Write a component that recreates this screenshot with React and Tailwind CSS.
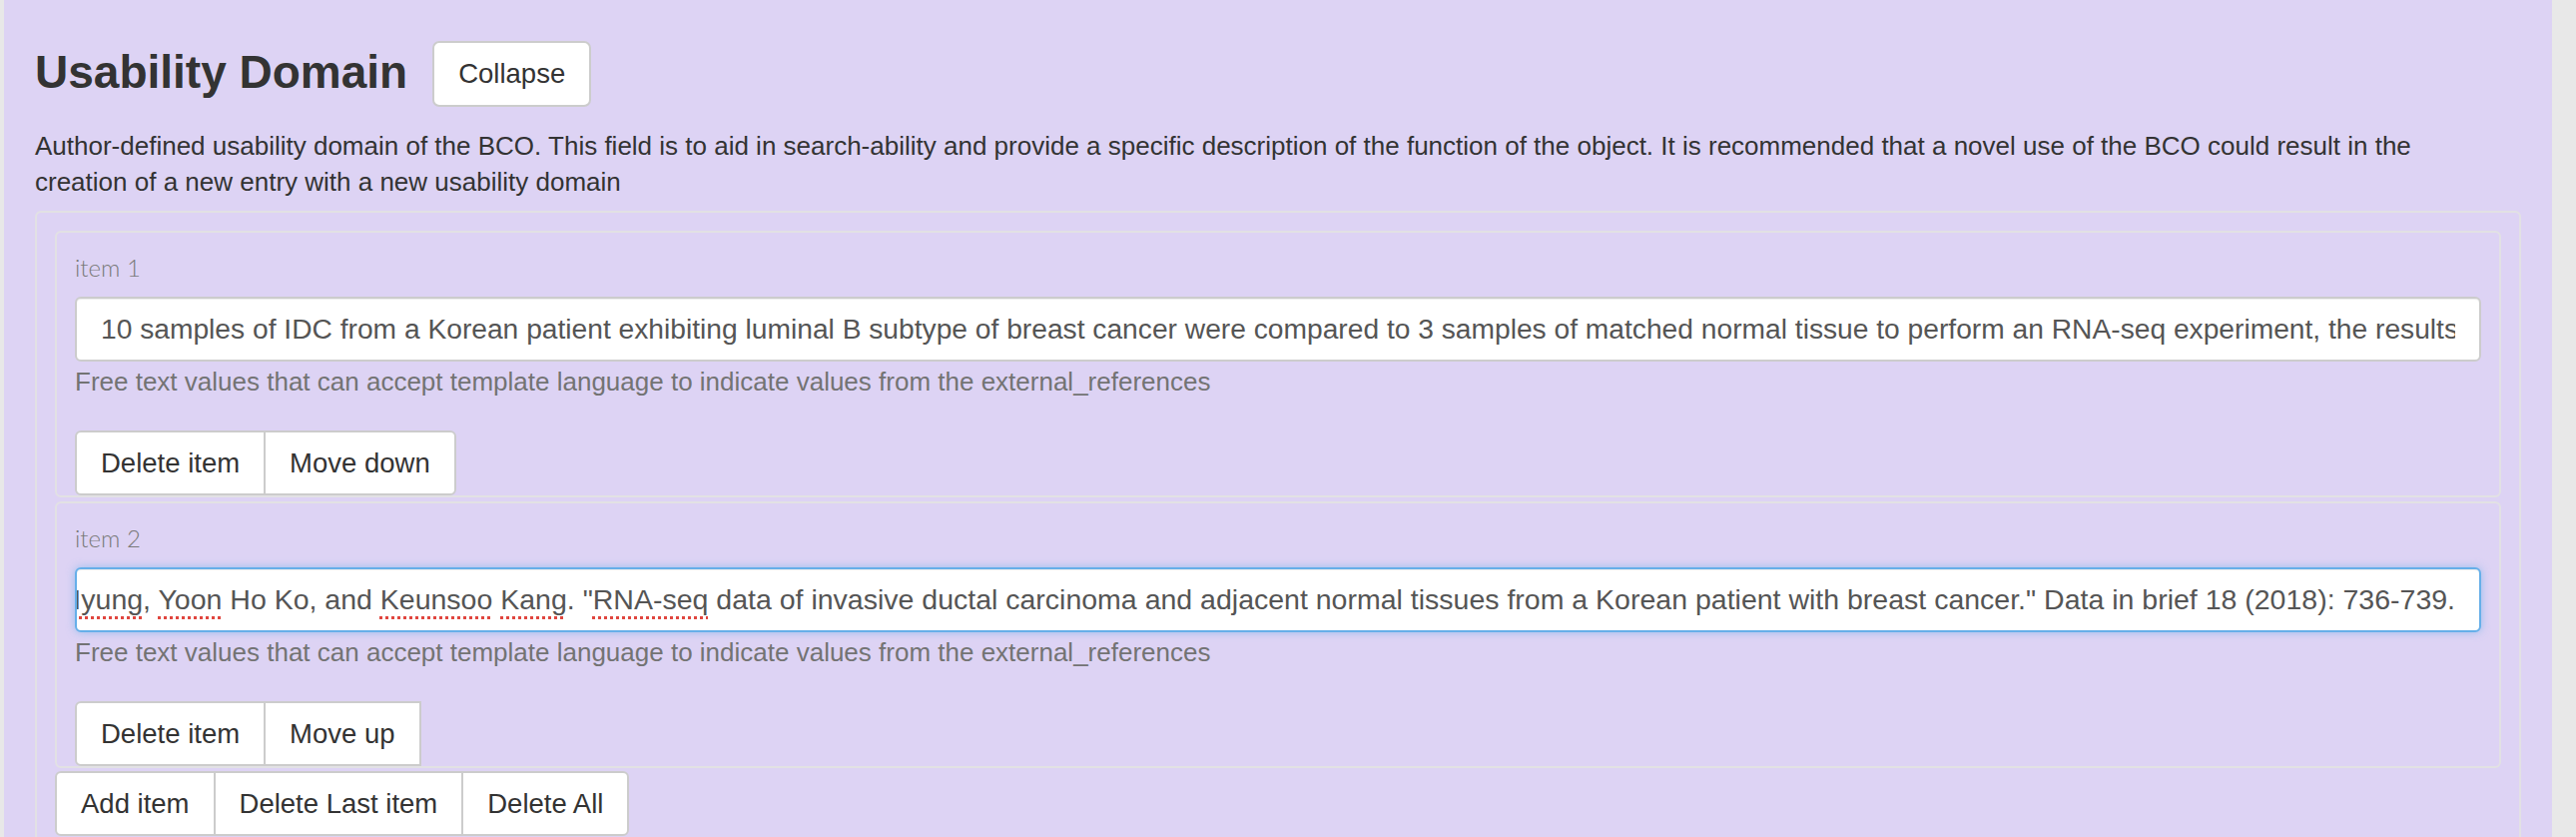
import React from "react";

const btn =
  "h-[65px] px-[24px] border-2 border-[#cccccc] bg-white text-[27.5px] text-[#333333] leading-none flex items-center";

// --- ITEM BOX ---
const Item = ({ label, children, buttons, squareEnd, className = "" }) => (
  <div className={`min-w-0 border-2 border-[#e2e1e4] rounded-[6px] px-[18px] pt-[19px] ${className}`}>
    <div className="text-[24px] leading-[32px] font-light text-[#7a7a7a] font-['Lato','Liberation_Sans',sans-serif] mb-[13px]">
      {label}
    </div>
    {children}
    <p className="mt-[2px] text-[26px] leading-[36px] text-[#737373]">
      Free text values that can accept template language to indicate values from the external_references
    </p>
    <div className="mt-[31px] flex">
      <button className={`${btn} rounded-l-[6px]`}>Delete item</button>
      <button className={`${btn} -ml-[2px] ${squareEnd ? "" : "rounded-r-[6px]"}`}>{buttons}</button>
    </div>
  </div>
);

const Spell = ({ children }) => (
  <span className="underline decoration-dotted decoration-[#e0463f] decoration-[3px] underline-offset-[7px]">
    {children}
  </span>
);

export default function App() {
  return (
    <div className="h-[838px] w-full overflow-hidden bg-[#e8e8e8] flex font-['Liberation_Sans',Arial,sans-serif]">
      <div className="w-[2556px] shrink-0 flex flex-col min-w-0">
        <div className="h-[2px] bg-[#f5f2c6]" />
        <div className="flex flex-1 min-w-0">
          <div className="w-[4px] shrink-0 bg-[#e8e8e8]" />
          <div className="flex-1 min-w-0 overflow-hidden bg-[#ddd3f4] px-[31px] pt-[41px]">
            {/* heading */}
            <div className="flex items-center gap-[25px]">
              <h3 className="text-[46px] font-bold text-[#333333] leading-none pb-[4px]">Usability Domain</h3>
              <button className="h-[66px] px-[24px] border-2 border-[#cccccc] rounded-[7px] bg-white text-[27.5px] text-[#333333]">
                Collapse
              </button>
            </div>
            <p className="mt-[21px] max-w-[2445px] text-[26px] leading-[36px] text-[#333333]">
              Author-defined usability domain of the BCO. This field is to aid in search-ability and provide a specific
              description of the function of the object. It is recommended that a novel use of the BCO could result in
              the creation of a new entry with a new usability domain
            </p>

            {/* array panel */}
            <div className="mt-[11px] min-w-0 border-2 border-[#e2e1e4] rounded-[6px] px-[18px] pt-[18px] h-[700px]">
              <Item label="item 1" buttons="Move down">
                <div className="h-[65px] min-w-0 border-2 border-[#cccccc] rounded-[6px] bg-white px-[24px] flex items-center overflow-hidden whitespace-nowrap text-[28.2px] text-[#555555] shadow-[inset_0_1px_1px_rgba(0,0,0,0.075)]">
                  <span className="min-w-0 overflow-hidden">
                    10 samples of IDC from a Korean patient exhibiting luminal B subtype of breast cancer were compared to
                    3 samples of matched normal tissue to perform an RNA-seq experiment, the results of which are reported
                    here
                  </span>
                </div>
              </Item>
              <Item label="item 2" buttons="Move up" squareEnd className="mt-[4px]">
                <div className="h-[65px] min-w-0 border-2 border-[#66afe9] rounded-[6px] bg-white px-[24px] flex items-center justify-end overflow-hidden whitespace-nowrap text-[28.5px] text-[#555555] shadow-[inset_0_1px_1px_rgba(0,0,0,0.075),0_0_8px_rgba(102,175,233,0.6)]">
                  <span className="shrink-0">
                    <Spell>Iyung</Spell>, <Spell>Yoon</Spell> Ho Ko, and <Spell>Keunsoo</Spell> <Spell>Kang</Spell>.
                    "<Spell>RNA-seq</Spell> data of invasive ductal carcinoma and adjacent normal tissues from a Korean
                    patient with breast cancer." Data in brief 18 (2018): 736-739.
                  </span>
                </div>
              </Item>
              <div className="mt-[3px] flex">
                <button className={`${btn} rounded-l-[6px]`}>Add item</button>
                <button className={`${btn} -ml-[2px]`}>Delete Last item</button>
                <button className={`${btn} -ml-[2px] rounded-r-[6px]`}>Delete All</button>
              </div>
            </div>
          </div>
        </div>
      </div>
      <div className="flex-1 bg-[#e8e8e8]" />
    </div>
  );
}
